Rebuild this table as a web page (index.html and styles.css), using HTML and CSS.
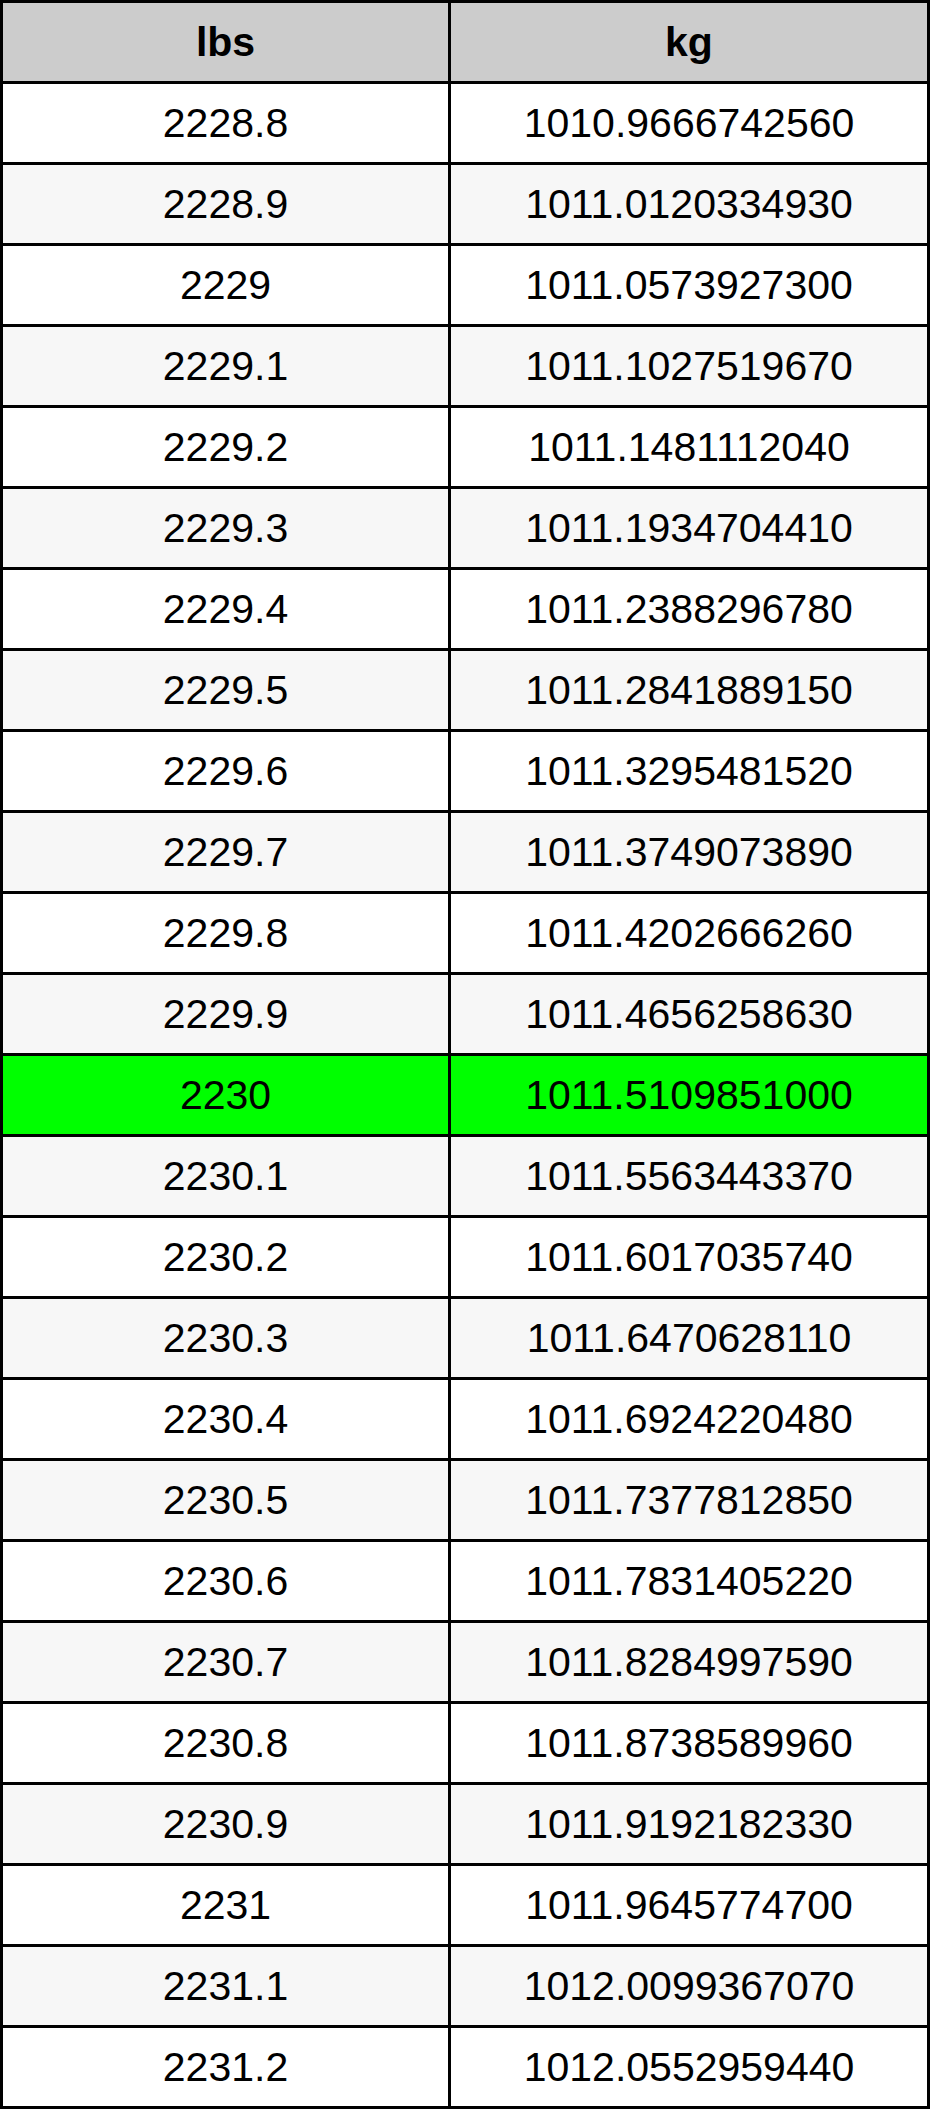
FILE: index.html
```html
<!DOCTYPE html>
<html>
<head>
<meta charset="utf-8">
<link rel="stylesheet" href="styles.css">
</head>
<body>
<table class="conv">
<colgroup><col class="c1"><col class="c2"></colgroup>
<thead>
<tr><th>lbs</th><th>kg</th></tr>
</thead>
<tbody>
<tr><td>2228.8</td><td>1010.9666742560</td></tr>
<tr><td>2228.9</td><td>1011.0120334930</td></tr>
<tr><td>2229</td><td>1011.0573927300</td></tr>
<tr><td>2229.1</td><td>1011.1027519670</td></tr>
<tr><td>2229.2</td><td>1011.1481112040</td></tr>
<tr><td>2229.3</td><td>1011.1934704410</td></tr>
<tr><td>2229.4</td><td>1011.2388296780</td></tr>
<tr><td>2229.5</td><td>1011.2841889150</td></tr>
<tr><td>2229.6</td><td>1011.3295481520</td></tr>
<tr><td>2229.7</td><td>1011.3749073890</td></tr>
<tr><td>2229.8</td><td>1011.4202666260</td></tr>
<tr><td>2229.9</td><td>1011.4656258630</td></tr>
<tr class="hl"><td>2230</td><td>1011.5109851000</td></tr>
<tr><td>2230.1</td><td>1011.5563443370</td></tr>
<tr><td>2230.2</td><td>1011.6017035740</td></tr>
<tr><td>2230.3</td><td>1011.6470628110</td></tr>
<tr><td>2230.4</td><td>1011.6924220480</td></tr>
<tr><td>2230.5</td><td>1011.7377812850</td></tr>
<tr><td>2230.6</td><td>1011.7831405220</td></tr>
<tr><td>2230.7</td><td>1011.8284997590</td></tr>
<tr><td>2230.8</td><td>1011.8738589960</td></tr>
<tr><td>2230.9</td><td>1011.9192182330</td></tr>
<tr><td>2231</td><td>1011.9645774700</td></tr>
<tr><td>2231.1</td><td>1012.0099367070</td></tr>
<tr><td>2231.2</td><td>1012.0552959440</td></tr>
</tbody>
</table>
</body>
</html>
```
FILE: styles.css
```css
html, body {
  margin: 0;
  padding: 0;
  background: #ffffff;
}
.conv {
  width: 930px;
  table-layout: fixed;
  border-collapse: collapse;
  border: 3px solid #000;
  font-family: "Liberation Sans", Arial, sans-serif;
  font-size: 41px;
  color: #000;
}
.c1 { width: 448px; }
.conv th, .conv td {
  border: 3px solid #000;
  height: 78px;
  padding: 0;
  text-align: center;
  vertical-align: middle;
  line-height: 1;
}
.conv th {
  background: #cccccc;
  font-weight: bold;
}
.conv tbody tr:nth-child(even) td {
  background: #f7f7f7;
}
.conv tbody tr:nth-child(odd) td {
  background: #ffffff;
}
.conv tbody tr.hl td {
  background: #00ff00;
}
```
